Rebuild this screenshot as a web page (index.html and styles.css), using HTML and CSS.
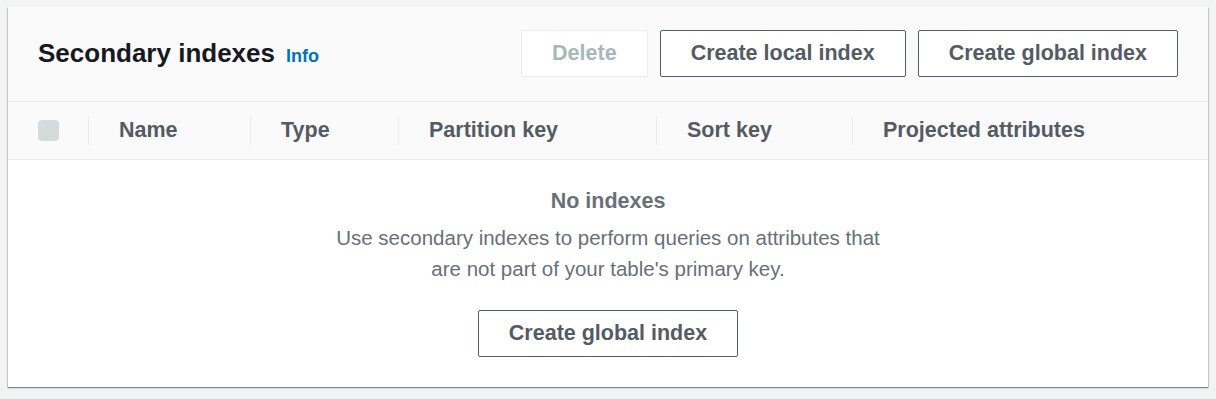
FILE: index.html
```html
<!DOCTYPE html>
<html lang="en">
<head>
    <meta charset="UTF-8">
    <title>Secondary indexes</title>
    <link rel="stylesheet" href="styles.css">
</head>
<body>

<div class="card">
    <div class="card-header">
        <div class="title">
            <h2>Secondary indexes</h2>
            <a href="#" class="info">Info</a>
        </div>
        <div class="actions">
            <button class="btn" disabled>Delete</button>
            <button class="btn">Create local index</button>
            <button class="btn">Create global index</button>
        </div>
    </div>

    <div class="table-head">
        <div class="cell check-cell"><span class="checkbox"></span></div>
        <div class="cell col-name">Name</div>
        <div class="cell col-type">Type</div>
        <div class="cell col-pk">Partition key</div>
        <div class="cell col-sk">Sort key</div>
        <div class="cell col-proj">Projected attributes</div>
    </div>

    <div class="empty">
        <div class="empty-title">No indexes</div>
        <p>Use secondary indexes to perform queries on attributes that<br>are not part of your table's primary key.</p>
        <button class="btn">Create global index</button>
    </div>
</div>

</body>
</html>
```

FILE: styles.css
```css
body {
    font-family: "Liberation Sans", Arial, sans-serif;
    margin: 0;
    padding: 7px 8px;
    background: #f2f3f3;
}
.card {
    width: 1200px;
    background: white;
    box-shadow: 0 1px 1px 0 rgba(0, 28, 36, 0.3), 1px 1px 1px 0 rgba(0, 28, 36, 0.15), -1px 1px 1px 0 rgba(0, 28, 36, 0.15);
}
.card-header {
    display: flex;
    justify-content: space-between;
    align-items: center;
    padding: 23px 30px 24px;
    background: #fafafa;
    border-bottom: 1px solid #eaeded;
}
.title {
    display: flex;
    align-items: baseline;
    gap: 11px;
}
.title h2 {
    margin: 0;
    font-size: 26px;
    font-weight: bold;
    color: #16191f;
}
.info {
    font-size: 18px;
    font-weight: bold;
    color: #0073bb;
    text-decoration: none;
}
.actions {
    display: flex;
    gap: 12px;
}
.btn {
    font-family: inherit;
    font-size: 21.5px;
    font-weight: bold;
    color: #545b64;
    background: white;
    border: 1px solid #545b64;
    border-radius: 2px;
    height: 47px;
    padding: 0 30px;
    cursor: pointer;
}
.btn:disabled {
    color: #aab7b8;
    border-color: #eaeded;
    padding: 0 30px;
    cursor: default;
}
.table-head {
    display: flex;
    align-items: center;
    padding: 14px 30px;
    background: #fafafa;
    border-bottom: 1px solid #eaeded;
    font-size: 21.5px;
    font-weight: bold;
    color: #545b64;
}
.cell {
    height: 29px;
    line-height: 29px;
    padding-left: 30px;
    border-left: 1px solid #eaeded;
}
.check-cell {
    width: 50px;
    padding-left: 0;
    border-left: none;
    display: flex;
    align-items: center;
}
.checkbox {
    width: 21px;
    height: 21px;
    border-radius: 4px;
    background: #d5dbdb;
}
.col-name { width: 131px; }
.col-type { width: 117px; }
.col-pk { width: 227px; }
.col-sk { width: 165px; }
.col-proj { flex: 1; }
.empty {
    text-align: center;
    padding: 26px 0 30px;
    color: #687078;
}
.empty-title {
    font-size: 21.5px;
    font-weight: bold;
    line-height: 30px;
}
.empty p {
    margin: 6px 0 26px;
    font-size: 20.5px;
    line-height: 31px;
}
```
